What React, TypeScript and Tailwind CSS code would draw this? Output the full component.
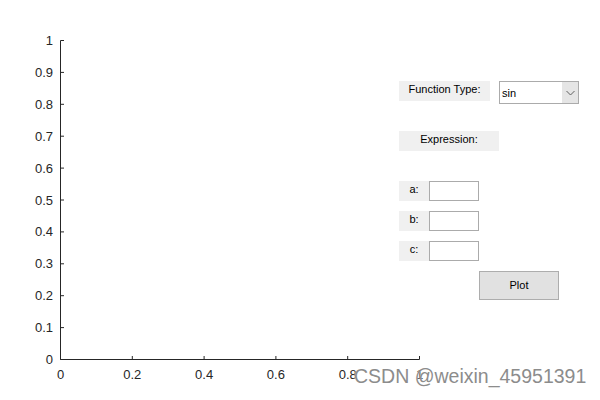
import React from "react";

const yTicks = [0, 0.1, 0.2, 0.3, 0.4, 0.5, 0.6, 0.7, 0.8, 0.9, 1];
const xTicks = [0, 0.2, 0.4, 0.6, 0.8, 1];

// axes box in page pixels
const X0 = 60.5;
const X1 = 419.5;
const Y0 = 359.5;
const Y1 = 40.5;

function Axes() {
  const sx = (v: number) => X0 + v * (X1 - X0);
  const sy = (v: number) => Y0 - v * (Y0 - Y1);
  return (
    <svg width={399} height={400} className="shrink-0 overflow-visible">
      <g stroke="#262626" strokeWidth={1} fill="none">
        <line x1={X0} y1={Y1} x2={X0} y2={Y0} />
        <line x1={X0} y1={Y0} x2={X1} y2={Y0} />
        {yTicks.map((t) => (
          <line key={`y${t}`} x1={X0} y1={sy(t)} x2={X0 + 3.5} y2={sy(t)} />
        ))}
        {xTicks.map((t) => (
          <line key={`x${t}`} x1={sx(t)} y1={Y0} x2={sx(t)} y2={Y0 - 3.5} />
        ))}
      </g>
      <g
        fill="#262626"
        fontFamily='"Liberation Sans", Arial, sans-serif'
        fontSize={13}
      >
        {yTicks.map((t) => (
          <text key={`yl${t}`} x={53} y={sy(t) + 4.5} textAnchor="end">
            {String(t)}
          </text>
        ))}
        {xTicks.map((t) => (
          <text key={`xl${t}`} x={sx(t)} y={379} textAnchor="middle">
            {String(t)}
          </text>
        ))}
      </g>
    </svg>
  );
}

function Label({ text, width }: { text: string; width: string }) {
  return (
    <div className={`h-[20px] ${width} bg-[#f0f0f0] pt-[1px] text-center text-[11px] leading-[14px] text-black`}>
      {text}
    </div>
  );
}

function ParamRow({ name }: { name: string }) {
  return (
    <div className="flex">
      <Label text={name} width="w-[30px]" />
      <div className="h-[20px] w-[50px] border border-[#ababab] bg-white" />
    </div>
  );
}

export default function App() {
  return (
    <div className="relative flex h-[400px] w-[600px] bg-white font-['Liberation_Sans',Arial,sans-serif]">
      <Axes />

      <div className="flex flex-col pt-[81px]">
        <div className="flex items-start gap-[9px]">
          <Label text="Function Type:" width="w-[91px]" />
          <div className="flex h-[23px] w-[80px] border border-[#ababab] bg-white">
            <div className="flex-1 pl-[2px] pt-[5px] text-[11px] leading-[12px] text-black">sin</div>
            <div className="flex w-[16px] items-center justify-center bg-[#e5e5e5]">
              <svg width="9" height="6" viewBox="0 0 9 6">
                <path d="M0.5 1 L4.5 5 L8.5 1" fill="none" stroke="#606060" strokeWidth="1" />
              </svg>
            </div>
          </div>
        </div>

        <div className="mt-[27px]">
          <Label text="Expression:" width="w-[100px]" />
        </div>

        <div className="mt-[30px] flex flex-col gap-[10px]">
          <ParamRow name="a:" />
          <ParamRow name="b:" />
          <ParamRow name="c:" />
        </div>

        <button className="ml-[80px] mt-[10px] h-[29px] w-[80px] border border-[#adadad] bg-[#e1e1e1] text-[11px] text-black">
          Plot
        </button>
      </div>

      <div className="absolute left-[354px] top-[364px] text-[19.5px] leading-[24px] text-[#8c8c8c] [text-shadow:0_0_2px_#fff]">
        CSDN @weixin_45951391
      </div>
    </div>
  );
}
